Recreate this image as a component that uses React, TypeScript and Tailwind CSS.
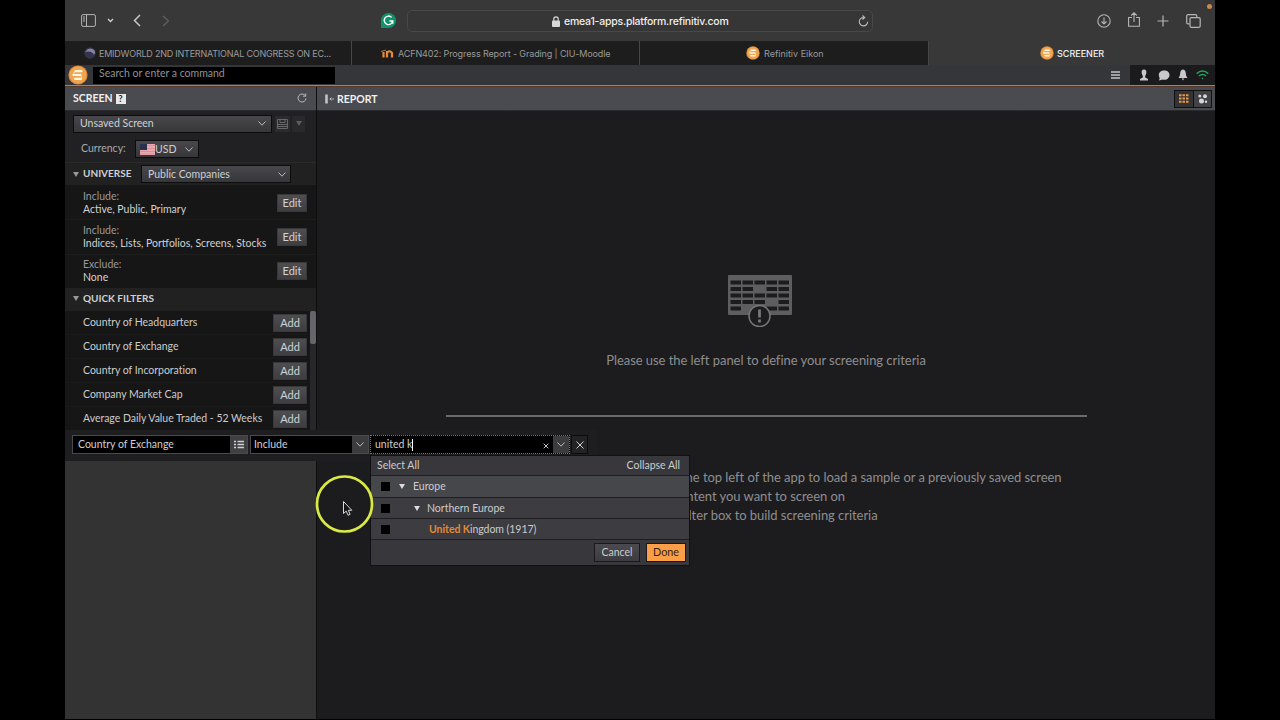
import type { ReactNode } from "react";

const universeItems = [
  { label: "Include:", value: "Active, Public, Primary" },
  { label: "Include:", value: "Indices, Lists, Portfolios, Screens, Stocks" },
  { label: "Exclude:", value: "None" },
];

const quickFilters = [
  "Country of Headquarters",
  "Country of Exchange",
  "Country of Incorporation",
  "Company Market Cap",
  "Average Daily Value Traded - 52 Weeks",
];

function Chevron() {
  return (
    <svg className="shrink-0" width="8" height="5" viewBox="0 0 8 5" fill="none" stroke="#b9b9bb" strokeWidth="1">
      <path d="M.5.5 4 4.2 7.5.5" />
    </svg>
  );
}

function Triangle({ color = "#98989a" }: { color?: string }) {
  return (
    <svg className="shrink-0" width="6" height="5" viewBox="0 0 6 5" fill={color}>
      <path d="M0 0h6L3 5z" />
    </svg>
  );
}

function EikonLogo({ size }: { size: number }) {
  return (
    <svg className="shrink-0" width={size} height={size} viewBox="0 0 20 20">
      <circle cx="10" cy="10" r="9.6" fill="#e08c3c" />
      <circle cx="10" cy="10" r="8.4" fill="#f0a550" />
      <path
        d="M7.500 6.200h6M5.500 10h7M7 13.800h6"
        stroke="#fff6df"
        strokeWidth="2.200"
        strokeLinecap="round"
      />
      <path d="M6.800 6.500Q5.500 8 5.500 10M12.500 10q1.500 1.500 .8 3.500" stroke="#fff6df" strokeWidth=".8" fill="none" />
    </svg>
  );
}

function SmallButton({ className, children }: { className: string; children: ReactNode }) {
  return (
    <button
      className={`flex h-[18px] shrink-0 items-center justify-center border border-[#38383a] bg-gradient-to-b from-[#4e4e51] to-[#3e3e41] pb-px text-[11px] leading-none text-[#d2d2d4] ${className}`}
    >
      {children}
    </button>
  );
}

function Select({ className, children }: { className: string; children: ReactNode }) {
  return (
    <div
      className={`flex h-[18px] shrink-0 items-center justify-between border border-[#0c0c0d] bg-gradient-to-b from-[#48484c] to-[#37373a] text-[10.5px] leading-none text-[#cfcfd1] ${className}`}
    >
      {children}
      <Chevron />
    </div>
  );
}

function BrowserBar() {
  return (
    <div className="flex h-[41px] items-center bg-[#383838] text-[#b5b5b5]">
      <svg className="ml-[16px]" width="15" height="13" viewBox="0 0 15 13" fill="none" stroke="currentColor">
        <rect x=".6" y=".6" width="13.800" height="11.800" rx="1.500" />
        <path d="M5.500.5v12M2 3h2M2 5h2M2 7h2" />
      </svg>
      <svg className="ml-[11px]" width="7" height="5" viewBox="0 0 7 5" fill="none" stroke="#d2d2d2" strokeWidth="1.300">
        <path d="m1 1 2.500 2.500L6 1" />
      </svg>
      <svg className="ml-[19px]" width="8" height="13" viewBox="0 0 8 13" fill="none" stroke="#c6c6c6" strokeWidth="1.500">
        <path d="M7 1 1.500 6.500 7 12" />
      </svg>
      <svg className="ml-[21px]" width="8" height="12" viewBox="0 0 8 12" fill="none" stroke="#5e5e5e" strokeWidth="1.300">
        <path d="m1 1 5.500 5L1 11" />
      </svg>
      <svg className="ml-[210px]" width="17" height="17" viewBox="0 0 18 18">
        <path d="M9 1a8 8 0 1 1 0 16H1V9a8 8 0 0 1 8-8z" fill="#13936b" />
        <path
          d="M12.300 5.700A4.500 4.500 0 1 0 13.500 9.500H10M13.500 9.500V12.500"
          fill="none"
          stroke="#fff"
          strokeWidth="1.500"
        />
      </svg>
      <div className="ml-[10px] flex h-[22px] w-[466px] items-center rounded-[5px] border border-[#484848] bg-[#363636]">
        <svg className="mt-[2px] ml-[144px]" width="8" height="11" viewBox="0 0 8 11">
          <rect y="4.500" width="8" height="6.500" rx="1" fill="#d8d8d8" />
          <path d="M1.800 5V3a2.200 2.200 0 0 1 4.400 0v2" fill="none" stroke="#d8d8d8" strokeWidth="1.200" />
        </svg>
        <span className="ml-[4px] w-[300px] pt-[2px] font-[Inter,sans-serif] text-[10.5px] font-medium tracking-[-0.22px] text-[#efefef]">
          emea1-apps.platform.refinitiv.com
        </span>
        <svg className="-ml-[6px]" width="11" height="12" viewBox="0 0 11 12" fill="none" stroke="#bdbdbd" strokeWidth="1.100">
          <path d="M6 2.500A4.200 4.200 0 1 0 9.700 6.800M4.500.5l2.200 2-2.200 2" />
        </svg>
      </div>
      <svg className="ml-[224px]" width="14" height="14" viewBox="0 0 14 14" fill="none" stroke="currentColor" strokeWidth="1.100">
        <circle cx="7" cy="7" r="6.200" />
        <path d="M7 3.500v6.500M4.500 7.500 7 10l2.500-2.500" />
      </svg>
      <svg className="mb-[2px] ml-[17px]" width="12" height="15" viewBox="0 0 12 15" fill="none" stroke="currentColor" strokeWidth="1.100">
        <path d="M4 5.500H.6v8.800h10.800V5.500H8M6 10V1M3.200 3.500 6 .8l2.800 2.700" />
      </svg>
      <svg className="ml-[17px]" width="12" height="12" viewBox="0 0 12 12" stroke="currentColor" strokeWidth="1.200">
        <path d="M6 .5v11M.5 6h11" />
      </svg>
      <svg className="ml-[17px]" width="15" height="14" viewBox="0 0 15 14" fill="none" stroke="currentColor" strokeWidth="1.200">
        <path d="M3.500 9.800H2A1.300 1.300 0 0 1 .7 8.500V2A1.300 1.300 0 0 1 2 .7h7.500A1.300 1.300 0 0 1 10.800 2v1.500" />
        <rect x="4" y="3.700" width="10.200" height="9.600" rx="1.200" />
      </svg>
      <span className="mb-[29px] ml-[6px] h-[5px] w-[5px] rounded-full bg-[#c98a4a]" />
    </div>
  );
}

function BrowserTabs() {
  return (
    <div className="flex h-[24px] bg-[#1d1d1d] font-[Inter,sans-serif] text-[9px] whitespace-nowrap text-[#9a9a9a]">
      <div className="flex w-[287px] items-center border-r border-[#464646] pl-[19px]">
        <svg className="shrink-0" width="12" height="12" viewBox="0 0 11 11">
          <circle cx="5.500" cy="5.500" r="5.300" fill="#34344f" />
          <path d="M1 4.500Q5-1 9.500 3q1.500 2-.5 4-2-4-8-2.500z" fill="#8583a0" />
        </svg>
        <span className="ml-[3px] pt-px tracking-[-0.22px]">EMIDWORLD 2ND INTERNATIONAL CONGRESS ON EC...</span>
      </div>
      <div className="flex w-[288px] items-center border-r border-[#464646] pl-[29px]">
        <svg className="shrink-0" width="13" height="9" viewBox="0 0 13 9" fill="none" stroke="#e88a37" strokeWidth="2.200">
          <path d="M2.500 3v5.500M6 8.500V2M6 4q2.500-3.500 5 0v4.500" />
          <path d="M0 2.500 5 1" stroke="#9b8065" strokeWidth="1" />
        </svg>
        <span className="ml-[4px] pt-px tracking-[-0.12px]">ACFN402: Progress Report - Grading | CIU-Moodle</span>
      </div>
      <div className="flex w-[288px] items-center pl-[106px]">
        <EikonLogo size={14} />
        <span className="ml-[4px] pt-px">Refinitiv Eikon</span>
      </div>
      <div className="flex flex-1 items-center border-l border-[#464646] bg-[#383838] pl-[111px] text-[#f0f0f0]">
        <EikonLogo size={14} />
        <span className="ml-[3px] pt-px font-medium">SCREENER</span>
      </div>
    </div>
  );
}

function CommandBar() {
  return (
    <div className="flex h-[20px] items-center bg-[#35363a]">
      <span className="ml-[3px]">
        <EikonLogo size={20} />
      </span>
      <div className="ml-[5px] flex h-[17px] w-[242px] items-center bg-black pb-[2px] pl-[6px] text-[10.5px] text-[#929294]">
        Search or enter a command
      </div>
      <svg className="ml-[776px]" width="9" height="8" viewBox="0 0 9 8" stroke="#c4c4c6" strokeWidth="1.400">
        <path d="M0 1h9M0 4h9M0 7h9" />
      </svg>
      <div className="ml-[10px] flex h-full flex-1 items-center bg-[#1b1b1d] text-[#c8c8ca]">
        <svg className="ml-[9px]" width="10" height="12" viewBox="0 0 10 12" fill="currentColor">
          <path d="M5 .5c2 0 2.600 1.500 2.300 3.500Q7 6 6.200 6.800v1.700L9 10v1.500H1V10l2.800-1.500V6.800Q3 6 2.700 4C2.400 2 3 .5 5 .5z" />
        </svg>
        <svg className="ml-[9px]" width="12" height="11" viewBox="0 0 12 11" fill="currentColor">
          <path d="M6.300.5C9.500.5 11.500 2.600 11.500 5S9.500 9.800 6.500 9.800q-1 0-2-.4L1 10.500l.7-2.600Q.8 6.700.8 5C.8 2.600 3 .5 6.300.5z" />
        </svg>
        <svg className="ml-[8px]" width="10" height="12" viewBox="0 0 10 12" fill="currentColor">
          <path d="M5 .5C7.300.8 7.800 2.800 7.900 5q.1 2.500 1.600 4h-9Q2 7.500 2.100 5C2.200 2.800 2.700.8 5 .5zM3.800 9.500h2.400L5 11.500z" />
        </svg>
        <svg className="ml-[8px]" width="13" height="10" viewBox="0 0 13 10" fill="none" stroke="#25a45a" strokeWidth="1.400">
          <path d="M.7 3.600q5.800-5 11.600 0M3 6q3.500-3 7 0" />
          <circle cx="6.500" cy="8.500" r=".8" fill="#25a45a" stroke="none" />
        </svg>
      </div>
    </div>
  );
}

function FilterPopup() {
  return (
    <div className="absolute top-[25px] left-[305px] h-[111px] w-[320px] border border-[#111113] bg-[#38383c] text-[10.5px] leading-none text-[#cbcbcd]">
      <div className="flex h-[19px] items-center justify-between pr-[9px] pl-[6px]">
        <span>Select All</span>
        <span>Collapse All</span>
      </div>
      <div className="flex h-[22px] items-center border-t border-[#1f1f22] bg-[#46474b] pb-px">
        <span className="ml-[10px] h-[9px] w-[9px] bg-black" />
        <span className="ml-[9px]">
          <Triangle color="#dcdcde" />
        </span>
        <span className="ml-[8px]">Europe</span>
      </div>
      <div className="flex h-[21px] items-center border-t border-[#1f1f22] bg-[#3c3c41]">
        <span className="ml-[10px] h-[9px] w-[9px] bg-black" />
        <span className="ml-[24px]">
          <Triangle color="#dcdcde" />
        </span>
        <span className="ml-[7px]">Northern Europe</span>
      </div>
      <div className="flex h-[21px] items-center border-t border-[#1f1f22] bg-[#3c3c41]">
        <span className="ml-[10px] h-[9px] w-[9px] bg-black" />
        <span className="ml-[39px] tracking-[-0.05px]">
          <span className="font-bold text-[#e28a35]">United K</span>ingdom (1917)
        </span>
      </div>
      <div className="flex h-[26px] items-center justify-end border-t border-[#1f1f22] pr-[3px]">
        <button className="h-[19px] w-[46px] border border-[#19191b] bg-gradient-to-b from-[#4b4b4f] to-[#3c3c40] leading-none">
          Cancel
        </button>
        <button className="ml-[6px] h-[19px] w-[40px] border border-[#19191b] bg-[#fa9f47] text-[10.8px] leading-none text-[#35200c]">
          Done
        </button>
      </div>
    </div>
  );
}

function FilterRow() {
  return (
    <div className="relative z-10 flex h-[31px] w-[532px] items-start bg-[#1e1e20] pt-[5px] pl-[7px] text-[10.5px] leading-none text-[#cfcfd1]">
      <div className="flex h-[19px] w-[176px] items-center justify-between border border-[#4a4a4c] bg-black pl-[5px]">
        <span className="pb-px">Country of Exchange</span>
        <span className="flex h-full w-[17px] items-center justify-center bg-[#404043]">
          <svg width="10" height="9" viewBox="0 0 10 9" stroke="#d0d0d2" strokeWidth="1.300">
            <path d="M0 1.500h2M3.500 1.500H10M0 4.500h2M3.500 4.500H10M0 7.500h2M3.500 7.500H10" />
          </svg>
        </span>
      </div>
      <div className="ml-[2px] flex h-[19px] w-[119px] items-center justify-between border border-[#4a4a4c] bg-black pl-[3px]">
        <span className="pb-px">Include</span>
        <span className="flex h-full w-[16px] items-center justify-center bg-[#3c3c3f]">
          <Chevron />
        </span>
      </div>
      <div className="ml-[1px] flex h-[19px] w-[200px] items-center border border-dotted border-[#a8692b] bg-black pl-[4px]">
        <span className="pb-px">united k</span>
        <span className="h-[12px] w-px bg-white" />
        <svg className="mt-[3px] ml-auto" width="6" height="6" viewBox="0 0 6 6" stroke="#c4c4c6">
          <path d="m.7.7 4.600 4.600M5.300.7.7 5.300" />
        </svg>
        <span className="ml-[4px] flex h-full w-[16px] items-center justify-center bg-[#3c3c3f]">
          <Chevron />
        </span>
      </div>
      <div className="ml-[1px] flex h-[19px] w-[17px] items-center justify-center border border-[#0c0c0d] bg-[#232325]">
        <svg width="8" height="8" viewBox="0 0 8 8" stroke="#d0d0d2" strokeWidth="1">
          <path d="m.5.5 7 7M7.500.5l-7 7" />
        </svg>
      </div>
      <FilterPopup />
    </div>
  );
}

function ScreenPanel() {
  return (
    <div className="flex w-[252px] shrink-0 flex-col border-r border-[#0e0e0f] bg-[#333334]">
      <div className="flex h-[24px] shrink-0 items-center border-b border-[#2a2a2c] bg-gradient-to-b from-[#4a4a4e] to-[#484b50] pl-[8px] text-[10.5px] font-bold text-[#f0f0f2]">
        SCREEN
        <span className="ml-[3px] flex h-[10px] w-[10px] items-center justify-center bg-[#e9e9eb] text-[9px] leading-none text-[#222]">
          ?
        </span>
        <svg className="mr-[9px] mb-[2px] ml-auto" width="10" height="10" viewBox="0 0 10 10" fill="none" stroke="#b9b9bb">
          <path d="M8.300 2.700A4 4 0 1 0 9 5.500M8.700.5v2.700H6" />
        </svg>
      </div>
      <div className="flex h-[25px] shrink-0 items-center bg-[#212123] pl-[8px]">
        <Select className="w-[199px] pr-[5px] pl-[6px]">Unsaved Screen</Select>
        <span className="ml-[3px] flex h-[16px] w-[15px] items-center justify-center bg-[#2b2b2d]">
          <svg width="11" height="10" viewBox="0 0 11 10" fill="none" stroke="#68686a">
            <path d="M.5.5h10v9H.5zM3 .5v3h5v-3M.5 5.500h10M.5 7.500h10" />
          </svg>
        </span>
        <span className="ml-[2px] flex h-[16px] w-[13px] items-center justify-center bg-[#29292b]">
          <Triangle color="#5c5c5e" />
        </span>
      </div>
      <div className="flex h-[26px] shrink-0 items-center bg-[#212123] pl-[16px] text-[10.5px] text-[#a9a9ab]">
        <span className="w-[54px]">Currency:</span>
        <Select className="w-[64px] pr-[5px] pl-[4px]">
          <span className="flex items-center">
            <svg width="15" height="11" viewBox="0 0 15 11">
              <path d="M0 0h15v11H0z" fill="#e9a9b1" />
              <path d="M0 1.500h15M0 4.500h15M0 7.500h15M0 10h15" stroke="#d98792" strokeWidth=".8" />
              <path d="M0 0h7v6H0z" fill="#28314b" />
            </svg>
            USD
          </span>
        </Select>
      </div>
      <div className="flex h-[23px] shrink-0 items-center border-t border-[#2a2a2b] bg-[#212122] pl-[8px] text-[10px] font-bold text-[#cfcfd1]">
        <Triangle />
        <span className="ml-[4px] w-[58px] pb-[2px]">UNIVERSE</span>
        <Select className="w-[150px] pr-[4px] pl-[6px] font-normal">Public Companies</Select>
      </div>
      <div className="flex h-[103px] shrink-0 flex-col bg-[#161617] pt-px">
        {universeItems.map((item, i) => (
          <div
            key={i}
            className="flex h-[34.300px] shrink-0 items-center justify-between border-b border-[#1d1d1e] pr-[9px] pl-[18px]"
          >
            <div className="text-[10.5px] leading-[13px] whitespace-nowrap text-[#d0d0d2]">
              <div className="text-[#98989a]">{item.label}</div>
              {item.value}
            </div>
            <SmallButton className="w-[30px]">Edit</SmallButton>
          </div>
        ))}
      </div>
      <div className="relative flex h-[23px] shrink-0 items-center bg-[#212122] pb-[2px] pl-[8px] text-[10px] font-bold text-[#cfcfd1]">
        <Triangle />
        <span className="ml-[4px]">QUICK FILTERS</span>
      </div>
      <div className="flex h-[119px] shrink-0 bg-[#161617]">
        <div className="flex flex-1 flex-col">
          {quickFilters.map((name) => (
            <div
              key={name}
              className="flex h-[24px] shrink-0 items-center justify-between border-b border-[#1a1a1b] pl-[18px] text-[10.5px] tracking-[-0.02px] text-[#cbcbcd]"
            >
              <span className="pt-px whitespace-nowrap">{name}</span>
              <SmallButton className="w-[34px]">Add</SmallButton>
            </div>
          ))}
        </div>
        <div className="ml-[3px] w-[6px] bg-[#27272a]">
          <div className="h-[33px] rounded-[2px] bg-[#66666a]" />
        </div>
      </div>
      <FilterRow />
    </div>
  );
}

function EmptyTableIcon() {
  const rows = [0, 1, 2, 3, 4];
  const cols = [0, 1, 2, 3, 4];
  const filled = ["1-2", "3-3", "4-1"];
  return (
    <svg className="ml-[-12px]" width="64" height="52" viewBox="0 0 64 52">
      <rect width="64" height="40" rx="1" fill="#5e5e60" />
      {rows.map((r) =>
        cols.map((c) =>
          filled.includes(`${r}-${c}`) ? null : (
            <rect key={`${r}-${c}`} x={2.5 + c * 12} y={5.5 + r * 6.5} width="10.500" height="4" fill="#1c1c1e" />
          )
        )
      )}
      <circle cx="31.500" cy="41" r="10.500" fill="#1c1c1e" stroke="#77777a" strokeWidth="1.500" />
      <path d="M31.500 34.500v8M31.500 44.500v3" stroke="#77777a" strokeWidth="2.800" />
    </svg>
  );
}

function ReportPanel() {
  return (
    <div className="flex flex-1 flex-col overflow-hidden bg-[#1c1c1e]">
      <div className="flex h-[24px] shrink-0 items-center border-b border-[#2a2a2c] bg-gradient-to-b from-[#4a4a4e] to-[#484b50] pl-[8px] text-[10.5px] font-bold text-[#f0f0f2]">
        <svg className="mt-px" width="9" height="10" viewBox="0 0 9 10" fill="none" stroke="#c6c6c8">
          <path d="M1.500.5v9" strokeWidth="2.500" />
          <path d="M4.500 5H9M6.500 3.500 5 5l1.500 1.500" strokeWidth=".8" />
        </svg>
        <span className="ml-[3px] pt-[2px]">REPORT</span>
        <div className="mr-[3px] ml-auto flex h-[18px] border border-[#111]">
          <span className="flex w-[18px] items-center justify-center bg-[#353234]">
            <svg width="10" height="9" viewBox="0 0 10 9" stroke="#e39a4b" strokeWidth="2" strokeDasharray="2.500 1">
              <path d="M0 1.300h9.500M0 4.500h9.500M0 7.700h9.500" />
            </svg>
          </span>
          <span className="flex w-[18px] items-center justify-center border-l border-[#111] bg-[#424246]">
            <svg width="10" height="10" viewBox="0 0 10 10" fill="#d5d5d7">
              <circle cx="1.800" cy="2" r="1.500" />
              <circle cx="7" cy="2.300" r="2" />
              <circle cx="3.500" cy="7" r="2.500" />
              <circle cx="8" cy="7.800" r="1.200" />
            </svg>
          </span>
        </div>
      </div>
      <div className="flex flex-col items-center pt-[164px] text-[13px] tracking-[-0.05px] text-[#8e8e90]">
        <EmptyTableIcon />
        <p className="mt-[24px] leading-[19px]">Please use the left panel to define your screening criteria</p>
        <hr className="mt-[45px] w-[641px] border-t-2 border-[#6a6a6c]" />
        <div className="mt-[51px] w-full leading-[19.200px] whitespace-nowrap">
          <p className="pl-[364px]">the top left of the app to load a sample or a previously saved screen</p>
          <p className="pl-[356px]">content you want to screen on</p>
          <p className="pl-[364px]">filter box to build screening criteria</p>
        </div>
      </div>
    </div>
  );
}

export default function App() {
  return (
    <div className="h-[720px] w-[1280px] overflow-hidden bg-black">
      <div className="relative mx-[65px] flex h-[719px] flex-col font-[Lato,sans-serif]">
        <BrowserBar />
        <BrowserTabs />
        <CommandBar />
        <div className="h-[2px] shrink-0 border-b border-[#54392b] bg-[#bd7a4f]" />
        <div className="flex flex-1">
          <ScreenPanel />
          <ReportPanel />
        </div>
        {/* highlighted pointer */}
        <svg className="absolute top-[475px] left-[250px] z-20" width="60" height="60" viewBox="0 0 60 60" fill="none">
          <circle cx="29.500" cy="29" r="27.500" stroke="#d9ea45" strokeWidth="2.700" />
          <path
            d="M28.500 26.500v12l2.700-2.400 1.900 4.200 2-1-1.800-4h3.500z"
            fill="#161616"
            stroke="#d8d8d8"
            strokeWidth="1"
          />
        </svg>
      </div>
    </div>
  );
}
